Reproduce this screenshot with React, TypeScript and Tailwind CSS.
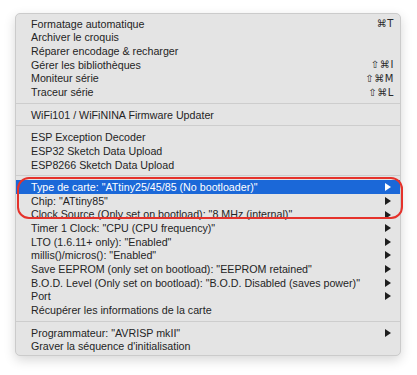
type Item = {
  label: string;
  shortcut?: string;
  submenu?: boolean;
  active?: boolean;
};

type Group = Item[];

const GROUPS: Group[] = [
  [
    { label: "Formatage automatique", shortcut: "⌘T" },
    { label: "Archiver le croquis" },
    { label: "Réparer encodage & recharger" },
    { label: "Gérer les bibliothèques", shortcut: "⇧⌘I" },
    { label: "Moniteur série", shortcut: "⇧⌘M" },
    { label: "Traceur série", shortcut: "⇧⌘L" },
  ],
  [{ label: "WiFi101 / WiFiNINA Firmware Updater" }],
  [
    { label: "ESP Exception Decoder" },
    { label: "ESP32 Sketch Data Upload" },
    { label: "ESP8266 Sketch Data Upload" },
  ],
  [
    { label: 'Type de carte: "ATtiny25/45/85 (No bootloader)"', submenu: true, active: true },
    { label: 'Chip: "ATtiny85"', submenu: true },
    { label: 'Clock Source (Only set on bootload): "8 MHz (internal)"', submenu: true },
    { label: 'Timer 1 Clock: "CPU (CPU frequency)"', submenu: true },
    { label: 'LTO (1.6.11+ only): "Enabled"', submenu: true },
    { label: 'millis()/micros(): "Enabled"', submenu: true },
    { label: 'Save EEPROM (only set on bootload): "EEPROM retained"', submenu: true },
    { label: 'B.O.D. Level (Only set on bootload): "B.O.D. Disabled (saves power)"', submenu: true },
    { label: "Port", submenu: true },
    { label: "Récupérer les informations de la carte" },
  ],
  [
    { label: 'Programmateur: "AVRISP mkII"', submenu: true },
    { label: "Graver la séquence d'initialisation" },
  ],
];

function Arrow({ light }: { light?: boolean }) {
  return (
    <svg width="6" height="8" viewBox="0 0 6 8" className="shrink-0">
      <path d="M0 0 L6 4 L0 8 Z" fill={light ? "#ffffff" : "#1e1e1e"} />
    </svg>
  );
}

function MenuRow({ item }: { item: Item }) {
  return (
    <div
      className={
        item.active
          ? "flex h-[13.65px] items-center bg-[#1b68d8] pl-[15px] pr-[9px] text-white"
          : "flex h-[13.65px] items-center pl-[15px] pr-[9px] text-[#242424]"
      }
    >
      <span className="flex-1 whitespace-nowrap">{item.label}</span>
      {item.shortcut && (
        <span className="-mr-[3px] text-[10px] tracking-[0.6px] text-[#2a2a2a] [font-family:'DejaVu_Sans',sans-serif]">
          {item.shortcut}
        </span>
      )}
      {item.submenu && <Arrow light={item.active} />}
    </div>
  );
}

export default function App() {
  return (
    <div className="min-h-[375px] w-[417px] bg-white pl-[15px] pt-[13px] [font-family:'Liberation_Sans',Arial,sans-serif] text-[10.7px]">
      <div className="relative w-[386px]">
        <div className="rounded-[5px] border border-[#cbcbcb] bg-[#e4e4e4] pb-[2px] pt-[3px] shadow-[0_4px_12px_rgba(0,0,0,0.16)]">
          {GROUPS.map((group, i) => (
            <div key={i}>
              {i > 0 && (
                <div className="py-[4px]">
                  <div className="h-px bg-[#cdcdcd]" />
                </div>
              )}
              {group.map((item) => (
                <MenuRow key={item.label} item={item} />
              ))}
            </div>
          ))}
        </div>

        {/* red annotation around the board options */}
        <div className="pointer-events-none absolute left-[2px] top-[164px] h-[42px] w-[386px] rounded-[12px] border-2 border-[#e5322b]" />
      </div>
    </div>
  );
}
